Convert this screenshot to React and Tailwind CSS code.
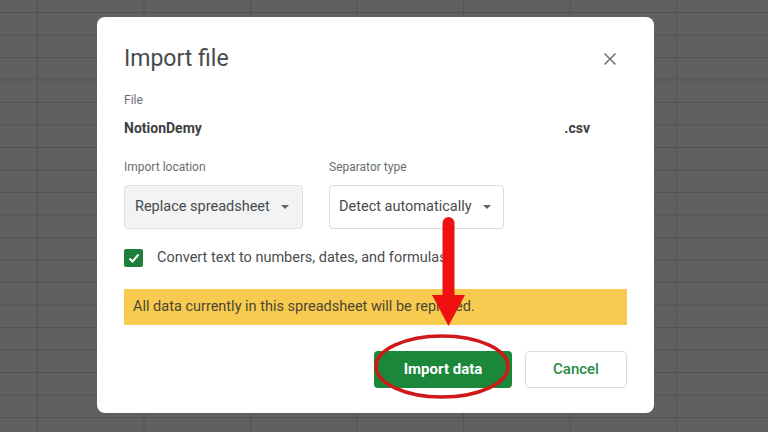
import React from 'react';

const font = { fontFamily: 'Roboto, "Liberation Sans", sans-serif' };

const Caret = () => (
  <svg width="8" height="4" viewBox="0 0 8 4" className="ml-[11px]">
    <path d="M0 0 L8 0 L4 4 Z" fill="#5f6368" />
  </svg>
);

const App = () => {
  return (
    <div
      className="relative w-[768px] h-[432px] overflow-hidden bg-[#606060] bg-[linear-gradient(to_right,#535353_1px,transparent_1px),linear-gradient(to_bottom,#535353_1px,transparent_1px)] bg-[size:106.5px_22.5px] bg-[position:37px_12px]"
      style={font}
    >
      <div className="absolute left-[97px] top-[17px] w-[557px] h-[396px] bg-white rounded-[8px] px-[27px] flex flex-col">
        {/* Header */}
        <div className="mt-[28px] flex items-center justify-between">
          <h1 className="text-[23px] leading-[28px] text-[#474a4d]">Import file</h1>
          <svg width="24" height="24" viewBox="0 0 24 24" className="mr-[5px]">
            <path d="M6.5 6.5 L17.5 17.5 M17.5 6.5 L6.5 17.5" stroke="#6f7378" strokeWidth="1.6" />
          </svg>
        </div>

        {/* File */}
        <p className="mt-[19px] text-[12px] leading-[16px] text-[#6a6e72]">File</p>
        <div className="mt-[10px] flex items-center text-[14px] leading-[20px] font-bold text-[#3c4043]">
          <span>NotionDemy</span>
          <span className="ml-auto mr-[37px]">.csv</span>
        </div>

        {/* Selects */}
        <div className="mt-[21px] flex gap-[26px]">
          <div className="w-[179px]">
            <p className="text-[12px] leading-[16px] text-[#6a6e72]">Import location</p>
            <div className="mt-[10px] h-[44px] flex items-center px-[10px] bg-[#f1f3f4] border border-[#e0e0e0] rounded-[4px] text-[14.5px] text-[#474a4d]">
              Replace spreadsheet
              <Caret />
            </div>
          </div>
          <div className="w-[175px]">
            <p className="text-[12px] leading-[16px] text-[#6a6e72]">Separator type</p>
            <div className="mt-[10px] h-[44px] flex items-center px-[9px] bg-white border border-[#dadce0] rounded-[4px] text-[14.5px] text-[#474a4d]">
              Detect automatically
              <Caret />
            </div>
          </div>
        </div>

        {/* Checkbox */}
        <div className="mt-[19px] flex items-center">
          <div className="w-[19px] h-[18px] rounded-[2px] bg-[#1e7e3a] flex items-center justify-center">
            <svg width="14" height="14" viewBox="0 0 14 14">
              <path d="M2.5 7.5 L5.5 10.5 L11.5 3.5" stroke="white" strokeWidth="2" fill="none" />
            </svg>
          </div>
          <span className="ml-[14px] text-[14.5px] leading-[20px] text-[#4a4d50]">
            Convert text to numbers, dates, and formulas
          </span>
        </div>

        {/* Warning banner */}
        <div className="mt-[21px] h-[36px] flex items-center px-[9px] bg-[#f6cb50] text-[14.5px] text-[#4f4632]">
          All data currently in this spreadsheet will be replaced.
        </div>

        {/* Buttons */}
        <div className="mt-[26px] flex justify-end gap-[13px]">
          <button className="w-[138px] h-[37px] rounded-[4px] bg-[#1a873b] text-white text-[15px] font-bold">
            Import data
          </button>
          <button className="w-[102px] h-[37px] rounded-[4px] bg-white border border-[#dadce0] text-[#2a8a48] text-[15px] font-medium">
            Cancel
          </button>
        </div>
      </div>

      {/* Annotation overlay */}
      <svg className="absolute inset-0 pointer-events-none" width="768" height="432" viewBox="0 0 768 432">
        <line x1="448.5" y1="223" x2="448.5" y2="300" stroke="#f01010" strokeWidth="12" strokeLinecap="round" />
        <path d="M432 295 L465 295 L448.5 326 Z" fill="#f01010" />
        <ellipse cx="442" cy="366.5" rx="66" ry="30.5" fill="none" stroke="#d01818" strokeWidth="3.5" />
      </svg>
    </div>
  );
};

export default App;
